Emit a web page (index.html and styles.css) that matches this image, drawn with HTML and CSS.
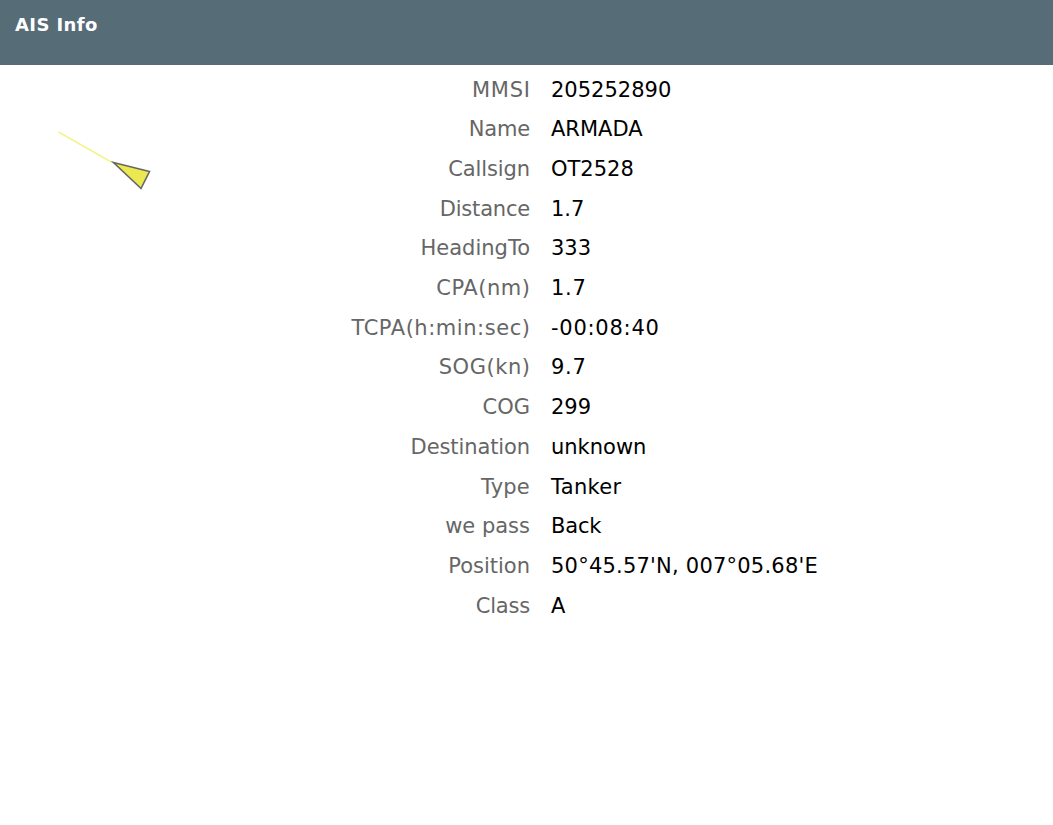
FILE: index.html
```html
<!DOCTYPE html>
<html lang="en">
<head>
<meta charset="utf-8">
<title>AIS Info</title>
<link rel="stylesheet" href="styles.css">
</head>
<body>
<header class="topbar"><h1 class="title">AIS Info</h1></header>
<main class="content">
  <svg class="ship" width="110" height="75" viewBox="50 125 110 75">
    <line x1="58.5" y1="132" x2="113" y2="163" class="ship-line"/>
    <polygon points="113.500,162.500 149.500,171.500 141,188.500" class="ship-body"/>
  </svg>
  <dl class="info">
    <div class="row"><dt class="track-xl">MMSI</dt><dd>205252890</dd></div>
    <div class="row"><dt class="track-n">Name</dt><dd>ARMADA</dd></div>
    <div class="row"><dt class="track-ns">Callsign</dt><dd>OT2528</dd></div>
    <div class="row"><dt class="track-n">Distance</dt><dd>1.7</dd></div>
    <div class="row"><dt>HeadingTo</dt><dd>333</dd></div>
    <div class="row"><dt class="track-l">CPA(nm)</dt><dd class="track-xl">1.7</dd></div>
    <div class="row"><dt class="track-l">TCPA(h:min:sec)</dt><dd class="track-xl">-00:08:40</dd></div>
    <div class="row"><dt class="track-l">SOG(kn)</dt><dd class="track-xl">9.7</dd></div>
    <div class="row"><dt>COG</dt><dd>299</dd></div>
    <div class="row"><dt class="track-ns">Destination</dt><dd>unknown</dd></div>
    <div class="row"><dt class="track-s">Type</dt><dd class="track-m">Tanker</dd></div>
    <div class="row"><dt>we pass</dt><dd class="track-n">Back</dd></div>
    <div class="row"><dt>Position</dt><dd class="track-s">50°45.57'N, 007°05.68'E</dd></div>
    <div class="row"><dt class="track-n">Class</dt><dd>A</dd></div>
  </dl>
</main>
</body>
</html>
```
FILE: styles.css
```css
html, body {
  margin: 0;
  padding: 0;
  background: #fff;
  font-family: "DejaVu Sans", sans-serif;
}
.topbar {
  height: 65px;
  box-sizing: border-box;
  background: #566d78;
  padding: 12px 15px 0;
}
.title {
  margin: 0;
  font-size: 18px;
  line-height: 25px;
  font-weight: 700;
  letter-spacing: 0.4px;
  color: #fff;
}
.content {
  position: relative;
}
.ship {
  position: absolute;
  left: 50px;
  top: 60px;
}
.ship-line {
  stroke: #f4f490;
  stroke-width: 1.7;
}
.ship-body {
  fill: #ebe850;
  stroke: #666;
  stroke-width: 1.6;
}
.info {
  margin: 0;
  padding-top: 5.5px;
  font-size: 21px;
  line-height: 39.7px;
}
.row {
  display: grid;
  grid-template-columns: 530px 1fr;
  column-gap: 21px;
}
.row dt {
  text-align: right;
  color: #666;
}
.row dd {
  margin: 0;
  color: #000;
}
/* Tracking adjustments: DejaVu's glyph widths differ slightly from the reference face */
.row .track-n { letter-spacing: -0.2px; }
.row .track-ns { letter-spacing: -0.1px; }
.row .track-s { letter-spacing: 0.22px; }
.row .track-m { letter-spacing: 0.33px; }
.row .track-l { letter-spacing: 0.55px; }
.row .track-xl { letter-spacing: 0.75px; }
.row dt.track-l { margin-right: -0.55px; }
.row dt.track-xl { margin-right: -0.75px; }
```
